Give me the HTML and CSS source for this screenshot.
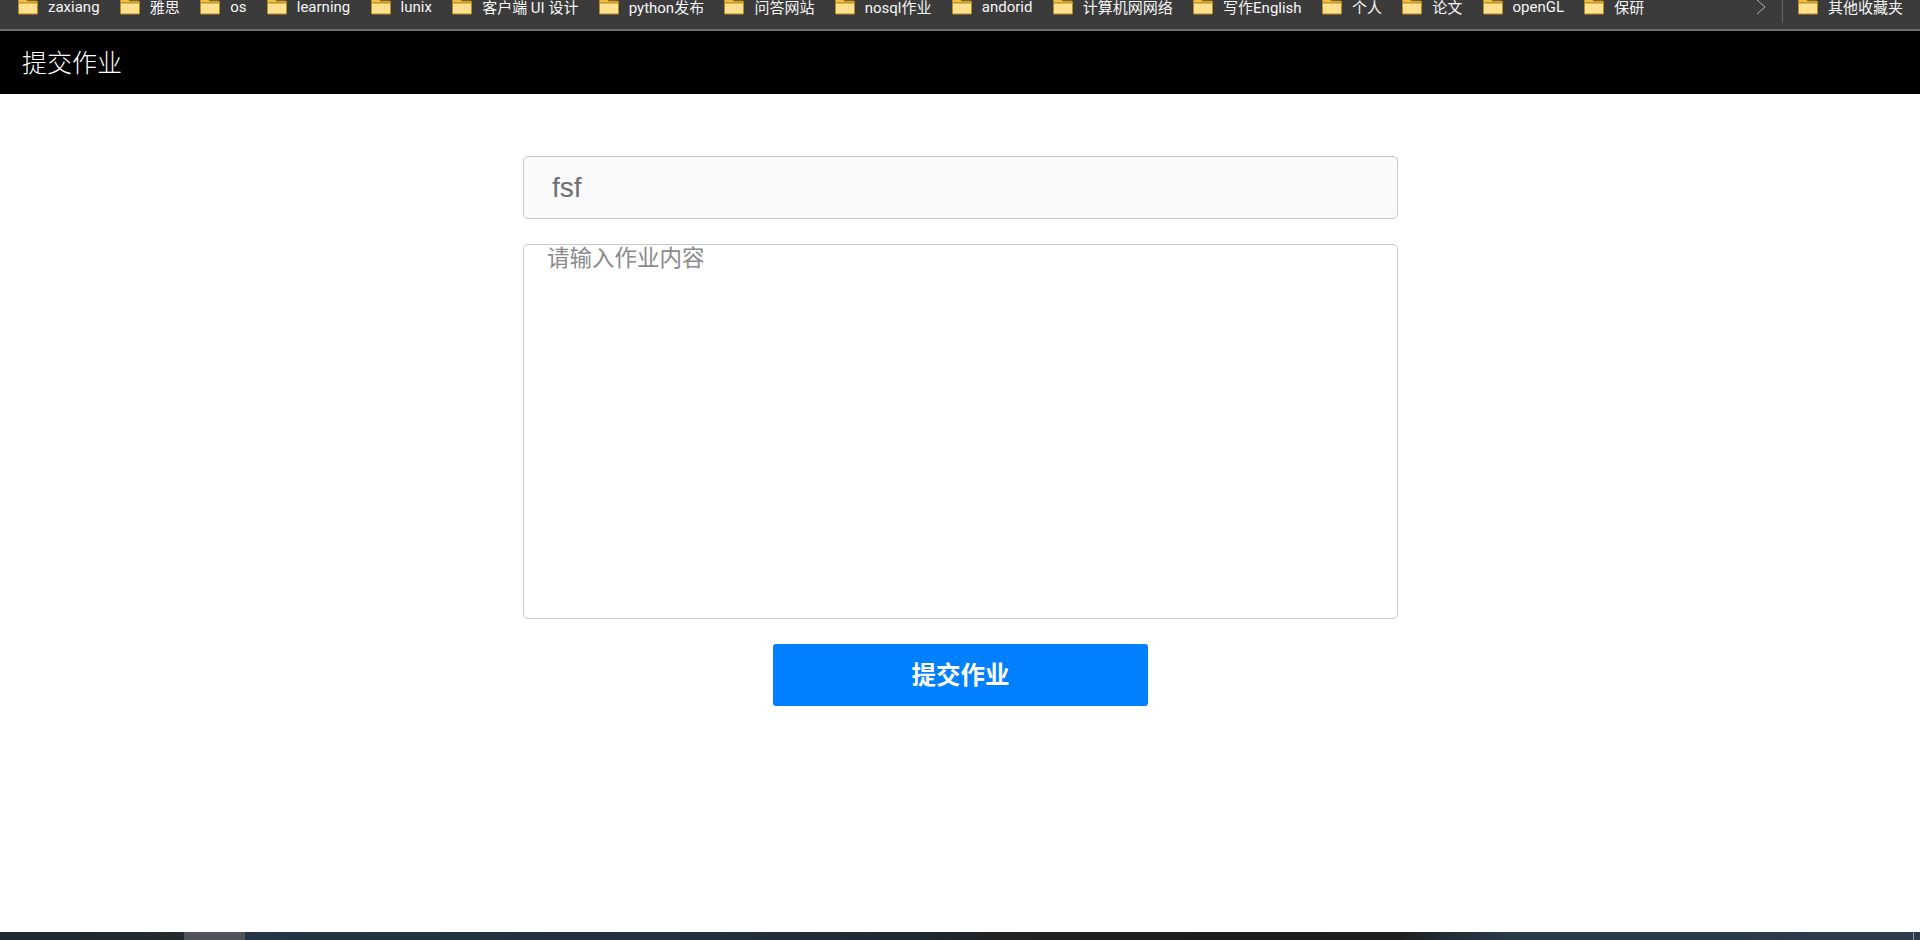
FILE: index.html
```html
<!DOCTYPE html>
<html>
  <head>
    <title>提交作业</title>
    <link rel="stylesheet" href="styles.css">
  </head>

  <body>
    <svg class="icon-defs" width="0" height="0">
      <symbol id="folder" viewBox="0 0 20 20">
        <path d="M0.5 6V2.5Q0.5 1.5 1.5 1.5H7.5L9.5 4H18.5Q19.5 4 19.5 5V6Z" fill="#f3bd48" stroke="#b88d1e"/>
        <path d="M0.5 6H19.5V16.5Q19.5 17 19 17H1Q0.5 17 0.5 16.5Z" fill="#ffe08e" stroke="#b88d1e"/>
      </symbol>
    </svg>

    <div class="page">
      <div class="bookmark-bar">
        <a class="bookmark"><svg class="folder-icon"><use href="#folder"/></svg>zaxiang</a>
        <a class="bookmark"><svg class="folder-icon"><use href="#folder"/></svg>雅思</a>
        <a class="bookmark"><svg class="folder-icon"><use href="#folder"/></svg>os</a>
        <a class="bookmark"><svg class="folder-icon"><use href="#folder"/></svg>learning</a>
        <a class="bookmark"><svg class="folder-icon"><use href="#folder"/></svg>lunix</a>
        <a class="bookmark"><svg class="folder-icon"><use href="#folder"/></svg>客户端 UI 设计</a>
        <a class="bookmark"><svg class="folder-icon"><use href="#folder"/></svg>python发布</a>
        <a class="bookmark"><svg class="folder-icon"><use href="#folder"/></svg>问答网站</a>
        <a class="bookmark"><svg class="folder-icon"><use href="#folder"/></svg>nosql作业</a>
        <a class="bookmark"><svg class="folder-icon"><use href="#folder"/></svg>andorid</a>
        <a class="bookmark"><svg class="folder-icon"><use href="#folder"/></svg>计算机网网络</a>
        <a class="bookmark"><svg class="folder-icon"><use href="#folder"/></svg>写作English</a>
        <a class="bookmark"><svg class="folder-icon"><use href="#folder"/></svg>个人</a>
        <a class="bookmark"><svg class="folder-icon"><use href="#folder"/></svg>论文</a>
        <a class="bookmark"><svg class="folder-icon"><use href="#folder"/></svg>openGL</a>
        <a class="bookmark"><svg class="folder-icon"><use href="#folder"/></svg>保研</a>
        <div class="bookmark-end">
          <svg class="chevron" width="10" height="16" viewBox="0 0 10 16">
            <path d="M1 1L9 8L1 15" fill="none" stroke="#b4b4b4" stroke-width="1"/>
          </svg>
          <span class="bookmark-divider"></span>
          <a class="bookmark"><svg class="folder-icon"><use href="#folder"/></svg>其他收藏夹</a>
        </div>
      </div>

      <header class="top-bar">
        <h1 class="top-title">提交作业</h1>
      </header>

      <main class="main-div">
        <form class="homework-form" onsubmit="return false;">
          <input class="title-input" type="text" value="fsf">
          <textarea class="content-input" placeholder="请输入作业内容"></textarea>
          <button class="submit-btn" type="submit">提交作业</button>
        </form>
      </main>

      <div class="taskbar">
        <span class="taskbar-app"></span>
      </div>
    </div>
  </body>
</html>
```

FILE: styles.css
```css
* {
  box-sizing: border-box;
}
html,
body {
  margin: 0;
  height: 100%;
}
body {
  font-family: "Liberation Sans", "Noto Sans CJK SC", sans-serif;
  background-color: #fff;
  overflow: hidden;
}
.icon-defs {
  display: none;
}
.page {
  display: flex;
  flex-direction: column;
  height: 100vh;
}

/* bookmarks */
.bookmark-bar {
  display: flex;
  align-items: center;
  flex: none;
  height: 31px;
  padding: 0 17px 16px 18px;
  gap: 20.3px;
  overflow: hidden;
  background-color: #3b3b3b;
  border-bottom: 2px solid #6a6a6a;
}
.bookmark {
  display: flex;
  align-items: center;
  gap: 10px;
  font-family: Roboto, "Noto Sans CJK SC", sans-serif;
  font-size: 15px;
  color: #f6f6f6;
  white-space: nowrap;
}
.folder-icon {
  flex: none;
  width: 20px;
  height: 20px;
}
.bookmark-end {
  display: flex;
  align-items: center;
  margin-left: auto;
}
.chevron {
  margin-right: 16px;
}
.bookmark-divider {
  width: 1px;
  height: 32px;
  margin-right: 15px;
  background-color: #666;
}

/* title bar */
.top-bar {
  display: flex;
  align-items: center;
  flex: none;
  height: 63px;
  padding: 0 0 3px 22px;
  background-color: #000;
}
.top-title {
  margin: 0;
  font-family: "Noto Sans CJK SC", sans-serif;
  font-size: 25px;
  font-weight: 300;
  color: #fff;
}

/* form */
.main-div {
  flex: 1;
  display: flex;
  justify-content: center;
  padding: 62.25px 0 0 1px;
}
.homework-form {
  display: flex;
  flex-direction: column;
  align-items: center;
  width: 875px;
}
.title-input {
  width: 100%;
  height: 62.5px;
  padding: 0 28px;
  border: 1px solid #c8c8cc;
  border-radius: 5px;
  background-color: #fafafa;
  font-family: "Liberation Sans", sans-serif;
  font-size: 28px;
  color: #6c7075;
  outline: none;
}
.content-input {
  display: block;
  width: 100%;
  height: 375px;
  margin-top: 25px;
  padding: 0 23px;
  border: 1px solid #c8c8cc;
  border-radius: 5px;
  font-family: "Noto Sans CJK SC", sans-serif;
  font-size: 22.5px;
  line-height: 23px;
  resize: none;
  outline: none;
}
.content-input::placeholder {
  color: #8a8a8a;
}
.submit-btn {
  width: 375px;
  height: 62.5px;
  margin-top: 25px;
  padding: 0 0 4px;
  border: none;
  border-radius: 3px;
  background-color: #0080ff;
  font-family: "Noto Sans CJK SC", sans-serif;
  font-size: 24.5px;
  font-weight: 700;
  color: #fff;
}

/* desktop showing below the window */
.taskbar {
  flex: none;
  display: flex;
  justify-content: flex-end;
  position: relative;
  height: 8px;
  background: linear-gradient(to right, #1f2a33 0, #252a2c 184px, #263545 245px, #22303d 700px, #1f2b33 900px, #202224 1000px, #1c1c1a 1240px, #1e1e1e 1400px, #232d38 1450px, #2b3a4a 1520px, #2c3a4c 1920px);
}
.taskbar-app {
  position: absolute;
  left: 184px;
  top: 0;
  width: 61px;
  height: 8px;
  background-color: #505458;
}
.taskbar::after {
  content: "";
  width: 1px;
  margin-right: 6px;
  background-color: #8a97a5;
}
```
